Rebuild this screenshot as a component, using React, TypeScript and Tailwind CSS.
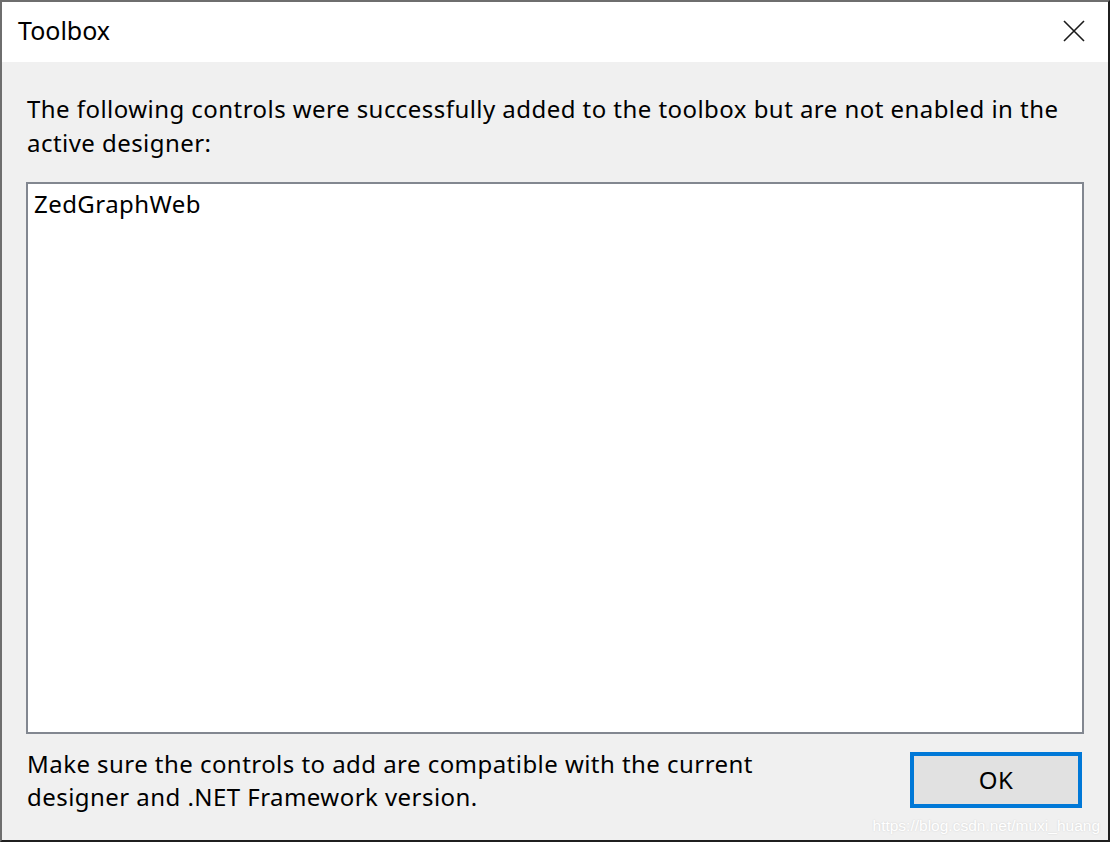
import React from "react";

export default function App() {
  const font = { fontFamily: '"Noto Sans", "Noto Sans CJK SC", sans-serif' };
  return (
    <div className="relative w-[1110px] h-[842px] flex flex-col border-2 border-t-[#6e6e6e] border-l-[#6e6e6e] border-r-[#1f1f1f] border-b-[#1f1f1f] bg-[#f0f0f0] text-black" style={font}>
      <div className="h-[60px] bg-white flex items-center justify-between pl-4 pr-[23px] shrink-0">
        <span className="text-[25px] leading-none mb-[3px]">Toolbox</span>
        <svg width="22" height="22" viewBox="0 0 22 22" className="block mb-[2px]">
          <path d="M1 1 L21 21 M21 1 L1 21" stroke="#1a1a1a" strokeWidth="1.6" fill="none" />
        </svg>
      </div>
      <div className="flex-1 flex flex-col px-6 pt-[30px]">
        <p className="text-[24px] leading-[34px] tracking-[0.45px] pl-[1px] whitespace-nowrap">
          The following controls were successfully added to the toolbox but are not enabled in the
          <br />
          active designer:
        </p>
        <div className="mt-[22px] h-[552px] border-2 border-[#828790] bg-white pl-[6px] pt-[3px]">
          <div className="text-[24px] leading-[34px] tracking-[0.45px]">ZedGraphWeb</div>
        </div>
        <div className="flex justify-between mt-[13px]">
          <p className="text-[24px] leading-[33px] tracking-[0.45px] pl-[1px] whitespace-nowrap">
            Make sure the controls to add are compatible with the current
            <br />
            designer and .NET Framework version.
          </p>
          <div className="mt-[5px] mr-[2px]">
            <button className="w-[172px] h-[56px] border-4 border-[#0078d7] bg-[#e1e1e1] text-[24px] leading-none tracking-[0.45px] flex items-center justify-center">
              OK
            </button>
          </div>
        </div>
      </div>
      <div className="absolute right-[8px] top-[812px] text-[15.5px] text-white whitespace-nowrap" style={{ fontFamily: '"Liberation Sans", Arial, sans-serif', textShadow: "0 0 2px rgba(0,0,0,0.14)" }}>
        https://blog.csdn.net/muxi_huang
      </div>
    </div>
  );
}
